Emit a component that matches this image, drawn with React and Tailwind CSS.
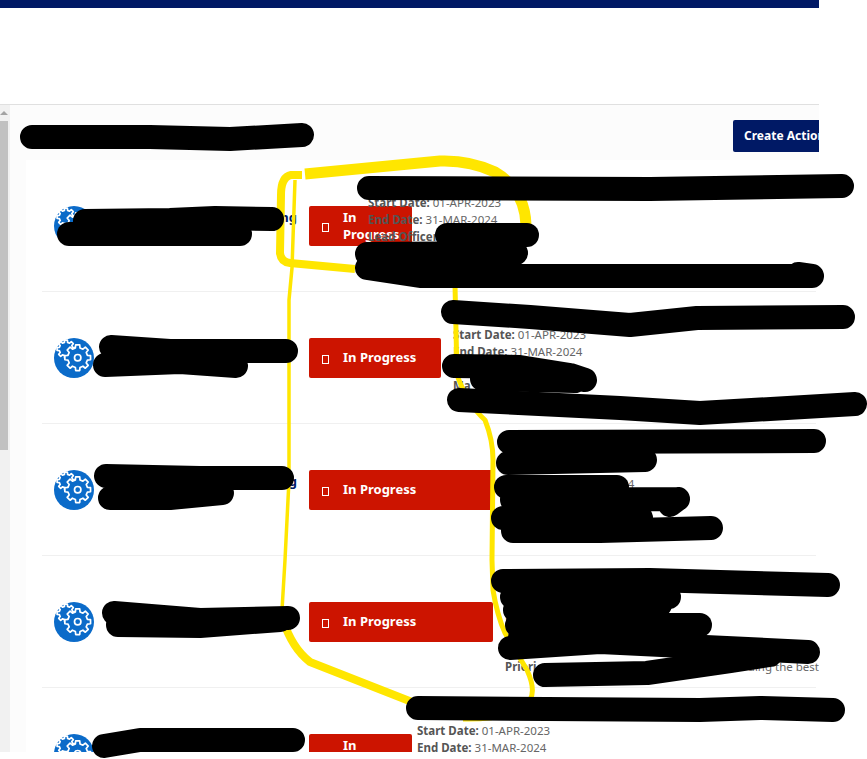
import React from "react";

function gearPath(cx, cy, rOuter, rInner, teeth) {
  const pts = [];
  const step = (Math.PI * 2) / teeth;
  for (let i = 0; i < teeth; i++) {
    const a = i * step - Math.PI / 2;
    const w = step * 0.2;
    const W = step * 0.3;
    const p = (r, t) => `${(cx + r * Math.cos(t)).toFixed(2)} ${(cy + r * Math.sin(t)).toFixed(2)}`;
    pts.push(`${i === 0 ? "M" : "L"}${p(rInner, a - W)}`);
    pts.push(`L${p(rOuter, a - w)}`);
    pts.push(`L${p(rOuter, a + w)}`);
    pts.push(`L${p(rInner, a + W)}`);
  }
  return pts.join(" ") + " Z";
}

function GearIcon() {
  return (
    <div className="w-10 h-10 rounded-full bg-[#0b6bc9] shrink-0">
      <svg width="40" height="40" viewBox="0 0 40 40" fill="none" stroke="#fff" strokeWidth="1.7" strokeLinejoin="round">
        <path d={gearPath(12, 11, 9, 6.8, 8)} />
        <path d={gearPath(23.7, 19.7, 13, 10, 8)} fill="#0b6bc9" />
        <circle cx="23.7" cy="19.7" r="3.2" />
      </svg>
    </div>
  );
}

function Line({ label, value }) {
  return (
    <div className="h-[17px] leading-[17px]">
      <span className="font-bold text-[#555555]">{label}</span>
      {value ? <span> {value}</span> : null}
    </div>
  );
}

function Dates() {
  return (
    <>
      <Line label="Start Date:" value="01-APR-2023" />
      <Line label="End Date:" value="31-MAR-2024" />
    </>
  );
}

function Row({ title, statusClass, detailClass, children, last }) {
  return (
    <div className={`flex items-center h-[132px] shrink-0 ml-4 pl-3 ${last ? "" : "border-b border-[#f0f0f0]"} mr-[3px]`}>
      <GearIcon />
      <div className="w-[203px] h-[34px] shrink-0 text-right text-[13px] leading-[17px] font-bold text-[#001965]">
        {title}
      </div>
      <div className={`flex h-fit rounded-[2px] bg-[#cc1400] text-white shrink-0 items-center pl-[13px] pr-2 py-[3px] ml-3 ${statusClass}`}>
        <span className="w-[7px] h-[9px] border border-white shrink-0 mt-1" />
        <span className="ml-[14px] text-[13px] leading-[17px] font-bold min-h-[34px] flex items-center">In Progress</span>
      </div>
      <div className={`self-start pt-[34px] whitespace-nowrap text-[11.5px] text-[#666666] shrink-0 ${detailClass}`}>
        {children}
      </div>
    </div>
  );
}

const blackStrokes = [
  "M32 137 L150 137 L230 139 L302 135",
  "M69 234 L240 234",
  "M85 221 L170 220 L215 218 L272 219",
  "M369 188 L650 189 L842 186",
  "M447 235 L527 235",
  "M367 254 L516 253",
  "M367 268 L420 276 L790 276 L812 276 M798 274 L812 276",
  "M111 347 L170 351 L286 351",
  "M105 365 L180 362 L236 366",
  "M106 476 L200 478 L282 478",
  "M110 498 L170 498 L222 493",
  "M114 613 L200 620 L288 618",
  "M118 625 L200 626 L280 620",
  "M104 746 L140 740 L293 740",
  "M453 312 L530 317 L630 325 L697 318 L843 317",
  "M454 366 L520 367 L570 375 L585 380",
  "M482 379 L575 381",
  "M459 400 L620 408 L700 413 L855 404",
  "M509 442 L814 441",
  "M508 463 L645 460",
  "M506 487 L617 487",
  "M512 500 L678 499 M670 505 L678 499",
  "M503 518 L641 518",
  "M513 531 L600 531 L711 528",
  "M503 581 L650 580 L828 585",
  "M512 597 L669 597",
  "M515 610 L660 605",
  "M517 625 L700 625",
  "M520 637 L690 637",
  "M510 648 L600 642 L808 652",
  "M545 675 L647 673 L730 661 L770 655",
  "M418 708 L700 710 L760 708 L833 710",
];

function Annotations() {
  return (
    <svg className="absolute left-0 top-0 pointer-events-none" width="867" height="759" viewBox="0 0 867 759" fill="none" strokeLinecap="round" strokeLinejoin="round">
      <g stroke="#ffe600">
        <path d="M305 174 L440 161 Q470 160 495 172 Q525 190 526 225 L526 240" strokeWidth="11" strokeLinecap="butt" />
        <path d="M302 175 L291 175 Q281 177 281 195 L280 253 Q281 262 290 263 L355 269" strokeWidth="8" strokeLinecap="butt" />
        <path d="M295 180 L292 268 L289 300 L289 480 L285 560 L282 610" strokeWidth="3.5" strokeLinecap="butt" />
        <path d="M283 620 Q292 648 310 662 L412 702" strokeWidth="8" strokeLinecap="butt" />
        <path d="M455 285 L457 375 Q468 405 485 420 Q493 440 493 460 L492 560 L493 590 Q497 615 505 633 L527 670 Q536 690 530 700 Q515 720 463 719" strokeWidth="5" strokeLinecap="butt" />
      </g>
      <g stroke="#000" strokeWidth="24">
        {blackStrokes.map((d) => (
          <path key={d} d={d} />
        ))}
      </g>
    </svg>
  );
}

export default function App() {
  return (
    <div className="relative w-[867px] h-[759px] overflow-hidden bg-white font-['Noto_Sans','Open_Sans',sans-serif]">
      <div className="w-[819px] h-[752px] overflow-hidden flex flex-col bg-white">
        <div className="h-2 bg-[#001965] shrink-0" />
        <div className="h-[97px] shrink-0 border-b border-[#e0e0e0]" />
        <div className="flex flex-1 min-h-0 bg-[#fcfcfc]">
          <div className="w-[10px] shrink-0 bg-[#f1f1f1] flex flex-col">
            <div className="w-2 h-[16px] flex items-center justify-center shrink-0">
              <div className="w-0 h-0 border-x-[4px] border-x-transparent border-b-[4px] border-b-[#a3a3a3]" />
            </div>
            <div className="w-2 h-[329px] bg-[#c1c1c1]" />
          </div>
          <div className="flex-1 min-w-0 flex flex-col pl-4">
            <div className="h-[55px] shrink-0 flex justify-end items-start pt-[15px] -mr-[14px]">
              <button className="w-[100px] h-8 rounded-[2px] bg-[#001965] text-white text-[12px] font-bold text-left pl-[11px] whitespace-nowrap">
                Create Action
              </button>
            </div>
            <div className="bg-white flex flex-col flex-1 min-h-0">
              <Row title="ng" statusClass="w-[103px]" detailClass="-ml-[44px]">
                <Dates />
                <Line label="Lead Officer:" />
              </Row>
              <Row title="" statusClass="w-[132px]" detailClass="ml-3">
                <Dates />
                <div className="h-[17px]" />
                <Line label="Ma" />
              </Row>
              <Row title="ng" statusClass="w-[184px]" detailClass="ml-3">
                <Dates />
              </Row>
              <Row title="" statusClass="w-[184px]" detailClass="ml-3">
                <Dates />
                <div className="h-[34px]" />
                <div className="flex justify-between w-[314px] h-[17px] leading-[17px] overflow-hidden">
                  <span className="font-bold text-[#555555]">Priori</span>
                  <span>ding the best</span>
                </div>
              </Row>
              <Row title="" statusClass="w-[103px]" detailClass="ml-[5px]" last>
                <Dates />
              </Row>
            </div>
          </div>
        </div>
      </div>
      <Annotations />
    </div>
  );
}
